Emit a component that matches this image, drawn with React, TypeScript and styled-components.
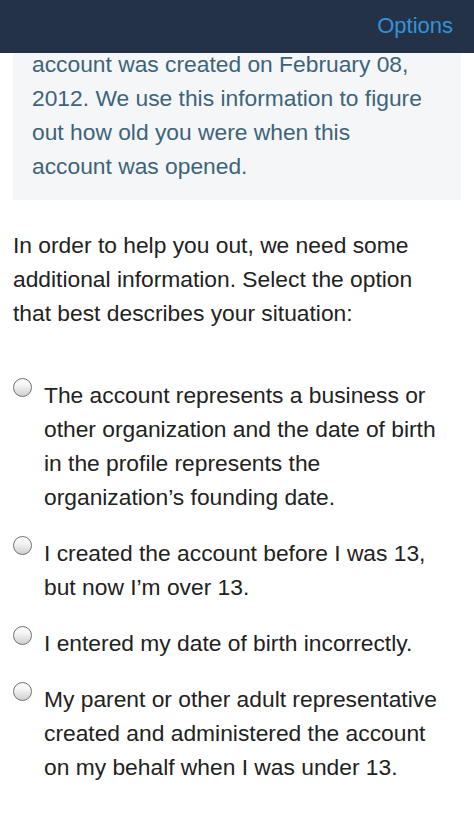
import React from 'react';
import styled, { createGlobalStyle } from 'styled-components';

const Global = createGlobalStyle`
  html, body {
    margin: 0;
    padding: 0;
    background: #ffffff;
  }
  body {
    font-family: "Liberation Sans", Arial, sans-serif;
    -webkit-font-smoothing: antialiased;
  }
`;

const Page = styled.div`
  position: relative;
  width: 474px;
  min-height: 815px;
  overflow: hidden;
`;

const Header = styled.header`
  position: absolute;
  top: 0;
  left: 0;
  right: 0;
  height: 53px;
  display: flex;
  align-items: center;
  justify-content: flex-end;
  padding: 0 21px;
  background: #243248;
  box-sizing: border-box;
  z-index: 2;
`;

const HeaderLink = styled.a`
  color: #3592d6;
  font-size: 22px;
  text-decoration: none;
  margin-top: -2px;
`;

const Content = styled.main`
  display: flex;
  flex-direction: column;
  padding: 0 13px;
`;

const InfoBox = styled.div`
  background: #f5f6f8;
  padding: 47px 29px 17px 19px;
  color: #3d6479;
  font-size: 22.8px;
  line-height: 34px;
`;

const Lead = styled.p`
  max-width: 420px;
  margin: 28px 0 48px;
  color: #222222;
  font-size: 22.8px;
  line-height: 34px;
`;

const Options = styled.div`
  display: flex;
  flex-direction: column;
  gap: 22px;
`;

const Option = styled.label`
  display: flex;
  align-items: flex-start;
  gap: 12px;
  color: #222222;
  font-size: 22.8px;
  line-height: 34px;
  cursor: pointer;
`;

const OptionText = styled.span`
  max-width: 402px;
`;

const Radio = styled.input.attrs({ type: 'radio' })`
  appearance: none;
  -webkit-appearance: none;
  flex: 0 0 auto;
  width: 19px;
  height: 19px;
  margin: 0;
  border-radius: 50%;
  border: 1px solid #6f6f6f;
  background: linear-gradient(to bottom, #ffffff 0%, #f3f3f3 40%, #cfcfcf 100%);
  box-shadow: inset 0 1px 1px rgba(255, 255, 255, 0.9);
  box-sizing: border-box;
`;

const choices = [
  'The account represents a business or other organization and the date of birth in the profile represents the organization\u2019s founding date.',
  'I created the account before I was 13, but now I\u2019m over 13.',
  'I entered my date of birth incorrectly.',
  'My parent or other adult representative created and administered the account on my behalf when I was under 13.',
];

export default function App() {
  return (
    <Page>
      <Global />
      <Header>
        <HeaderLink href="#">Options</HeaderLink>
      </Header>
      <Content>
        <InfoBox>
          account was created on February 08, 2012. We use this information to figure out how old you were when this account was opened.
        </InfoBox>
        <Lead>
          In order to help you out, we need some additional information. Select the option that best describes your situation:
        </Lead>
        <Options>
          {choices.map((c) => (
            <Option key={c}>
              <Radio name="situation" />
              <OptionText>{c}</OptionText>
            </Option>
          ))}
        </Options>
      </Content>
    </Page>
  );
}
